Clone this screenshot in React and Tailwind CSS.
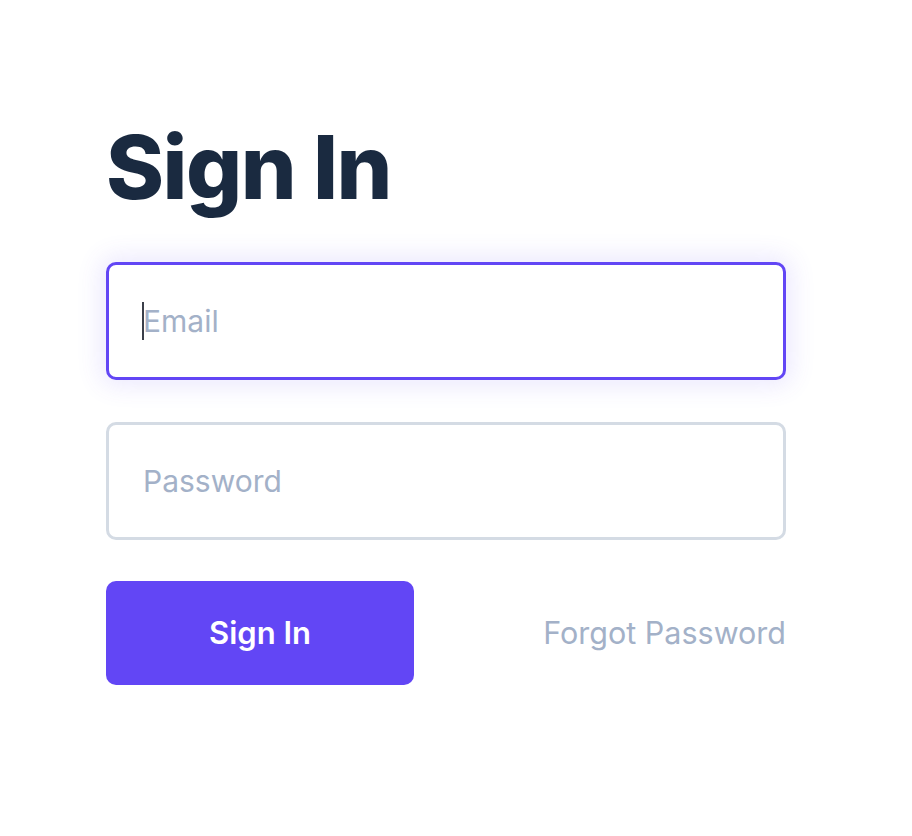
import React, { useEffect, useRef } from "react";

export default function App() {
  const emailRef = useRef(null);

  // Le champ email est focus au chargement
  useEffect(() => {
    emailRef.current?.focus();
  }, []);

  return (
    <div
      className="min-h-[836px] w-full bg-white"
      style={{ fontFamily: "Inter, 'Noto Sans', sans-serif" }}
    >
      <div className="pl-[106px] pt-[112px] w-[786px]">
        <h1 className="text-[88px] leading-[110px] font-extrabold text-[#1a2a40] tracking-[-1.5px]">
          Sign In
        </h1>

        <form className="mt-[40px] flex flex-col" onSubmit={(e) => e.preventDefault()}>
          <div className="relative">
            <input
              ref={emailRef}
              type="email"
              placeholder="Email"
              className="h-[118px] w-full rounded-[10px] border-[3px] border-[#6246f5] bg-white px-[34px] text-[30px] text-[#1a2a40] placeholder:text-[#a3b1c8] outline-none shadow-[0_0_24px_6px_rgba(98,70,245,0.12)] caret-[#1a2a40]"
            />
            {/* curseur visible dans la capture */}
            <span className="pointer-events-none absolute left-[36px] top-[40px] h-[38px] w-[2px] bg-[#3b3f4a]" />
          </div>
          <input
            type="password"
            placeholder="Password"
            className="mt-[42px] h-[118px] w-full rounded-[10px] border-[3px] border-[#d4dbe4] bg-white px-[34px] text-[30px] text-[#1a2a40] placeholder:text-[#a3b1c8] outline-none"
          />

          <div className="mt-[41px] flex items-center justify-between">
            <button
              type="submit"
              className="h-[104px] w-[308px] rounded-[10px] bg-[#6246f5] text-[31px] font-semibold text-white"
            >
              Sign In
            </button>
            <a href="#" className="text-[30.5px] text-[#a3b1c8]">
              Forgot Password
            </a>
          </div>
        </form>
      </div>
    </div>
  );
}
